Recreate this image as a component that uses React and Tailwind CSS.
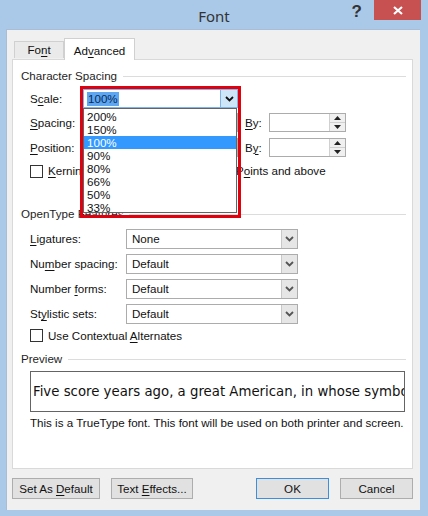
import React from 'react'

const UI = { fontFamily: "'Liberation Sans', Arial, sans-serif" }

function Chevron({ dark }) {
  return (
    <svg width="9" height="6" viewBox="0 0 9 6">
      <path d="M1 1 L4.5 4.5 L8 1" fill="none" stroke={dark ? '#111' : '#555'} strokeWidth="1.8" />
    </svg>
  )
}

function Combo({ value, width = 172 }) {
  return (
    <div className="flex h-[20px] border border-[#acacac] bg-white" style={{ width }}>
      <div className="flex-1 flex items-center pl-[5px] text-[#111]">{value}</div>
      <div className="w-[16px] flex items-center justify-center bg-[#e6e6e6] border-l border-[#c8c8c8]">
        <Chevron />
      </div>
    </div>
  )
}

function Spin() {
  return (
    <div className="flex h-[19px] w-[77px] border border-[#acacac] bg-white">
      <div className="flex-1" />
      <div className="w-[16px] flex flex-col border-l border-[#d0d0d0] bg-[#f0f0f0]">
        <div className="flex-1 flex items-center justify-center border-b border-[#d0d0d0]">
          <svg width="7" height="4" viewBox="0 0 7 4"><path d="M0 4 L3.5 0 L7 4 Z" fill="#222" /></svg>
        </div>
        <div className="flex-1 flex items-center justify-center">
          <svg width="7" height="4" viewBox="0 0 7 4"><path d="M0 0 L3.5 4 L7 0 Z" fill="#222" /></svg>
        </div>
      </div>
    </div>
  )
}

function Check({ children }) {
  return (
    <div className="flex items-center gap-[5px]">
      <div className="w-[13px] h-[13px] border border-[#333] bg-white shrink-0" />
      <span className="whitespace-nowrap">{children}</span>
    </div>
  )
}

function Header({ children }) {
  return (
    <div className="h-[16px] flex items-center gap-[6px] text-[#1e1e1e]">
      <span>{children}</span>
      <div className="flex-1 h-px bg-[#dcdcdc]" />
    </div>
  )
}

function Btn({ children, w, primary }) {
  return (
    <div className={`h-[21px] flex items-center justify-center text-[11.6px] text-[#111] bg-[#e1e1e1] border ${primary ? 'border-[#3c8ee0]' : 'border-[#adadad]'}`} style={{ width: w }}>
      <span>{children}</span>
    </div>
  )
}

const U = ({ children }) => <span className="underline underline-offset-2 decoration-1">{children}</span>

const scales = ['200%', '150%', '100%', '90%', '80%', '66%', '50%', '33%']

export default function App() {
  return (
    <div className="w-[428px] h-[516px] bg-[#aac8e8] flex flex-col overflow-hidden" style={UI}>
      {/* title bar */}
      <div className="h-[29px] grid grid-cols-[1fr_auto_1fr] shrink-0">
        <div />
        <div className="text-[15px] text-[#333] pt-[5px]" style={{ fontFamily: "'Noto Sans', sans-serif" }}>Font</div>
        <div className="flex justify-end items-start pr-[7px]">
          <div className="text-[17px] font-bold text-[#333] leading-none pt-[3px] mr-[12px]">?</div>
          <div className="w-[47px] h-[20px] bg-[#c75050] flex items-center justify-center">
            <svg width="10" height="9" viewBox="0 0 10 9"><path d="M1 1 L9 8 M9 1 L1 8" stroke="#fff" strokeWidth="2.2" /></svg>
          </div>
        </div>
      </div>

      {/* client */}
      <div className="ml-[6px] mr-[8px] h-[481px] bg-[#f0f0f0] border-l border-t border-[#a9bdd6] pl-[5px] pr-[7px] flex flex-col">
        {/* tabs */}
        <div className="h-[29px] flex items-end pl-[2px] relative z-10 text-[11.6px] text-[#111]">
          <div className="w-[50px] h-[17px] mb-px border border-b-0 border-[#d0d0d0] bg-[#eaeaea] flex items-center justify-center">
            <span>Fo<U>n</U>t</span>
          </div>
          <div className="w-[71px] h-[22px] border border-b-0 border-[#d0d0d0] bg-white flex items-start justify-center pt-[3px] -mb-px">
            <span>Ad<U>v</U>anced</span>
          </div>
        </div>

        {/* panel */}
        <div className="h-[410px] bg-white border border-[#d9d9d9] pl-[8px] pr-[6px] pt-[8px] text-[11.6px] text-[#111] relative">
          <Header>Character Spacing</Header>

          <div className="pl-[9px]">
            {/* Scale */}
            <div className="mt-[5px] h-[19px] flex items-center">
              <span className="w-[53px]">S<U>c</U>ale:</span>
              <div className="relative">
                <div className="flex h-[19px] w-[155px] border border-[#7eb4ea] bg-white">
                  <div className="flex-1 flex items-center pl-[3px]">
                    <span className="bg-[#5ea6ef] text-[#0a2a5c] px-px leading-[14px]">100%</span>
                  </div>
                  <div className="w-[17px] flex items-center justify-center bg-[#cfe6f8] border-l border-[#7eb4ea]">
                    <Chevron dark />
                  </div>
                </div>
                {/* dropdown list */}
                <div className="absolute left-0 top-[19px] w-[154px] h-[105px] bg-white border border-[#646464] z-20 pt-px">
                  {scales.map(s => (
                    <div key={s} className={`h-[13px] leading-[13px] pl-[3px] ${s === '100%' ? 'bg-[#3399ff] text-white' : ''}`}>{s}</div>
                  ))}
                </div>
                {/* red highlight */}
                <div className="absolute -left-[3px] -top-[3px] w-[161px] h-[132px] border-[3px] border-[#e0000e] z-30 pointer-events-none" />
              </div>
            </div>

            {/* Spacing */}
            <div className="mt-[5px] h-[19px] flex items-center">
              <span className="w-[53px]"><U>S</U>pacing:</span>
              <div className="w-[155px] h-[19px] border border-[#acacac] bg-white" />
              <span className="w-[24px] ml-[7px]"><U>B</U>y:</span>
              <Spin />
            </div>

            {/* Position */}
            <div className="mt-[6px] h-[19px] flex items-center">
              <span className="w-[53px]"><U>P</U>osition:</span>
              <div className="w-[155px] h-[19px] border border-[#acacac] bg-white" />
              <span className="w-[24px] ml-[7px]">B<U>y</U>:</span>
              <Spin />
            </div>

            {/* Kerning */}
            <div className="mt-[7px] h-[14px] flex items-center">
              <div className="w-[206px]">
                <Check><U>K</U>erning for fonts:</Check>
              </div>
              <span>P<U>o</U>ints and above</span>
            </div>
          </div>

          <div className="mt-[28px]">
            <Header>OpenType Features</Header>
          </div>

          <div className="pl-[9px]">
            {[
              [<><U>L</U>igatures:</>, 'None'],
              [<>Nu<U>m</U>ber spacing:</>, 'Default'],
              [<>Number <U>f</U>orms:</>, 'Default'],
              [<>St<U>y</U>listic sets:</>, 'Default'],
            ].map(([label, val], i) => (
              <div key={i} className={`${i === 0 ? 'mt-[7px]' : 'mt-[5px]'} h-[20px] flex items-center`}>
                <span className="w-[96px] whitespace-nowrap">{label}</span>
                <Combo value={val} />
              </div>
            ))}
            <div className="mt-[5px] h-[13px] flex items-center">
              <Check>Use Contextual <U>A</U>lternates</Check>
            </div>
          </div>

          <div className="mt-[9px]">
            <Header>Preview</Header>
          </div>

          <div className="pl-[9px]">
            <div className="mt-[4px] w-[375px] h-[41px] border border-[#646464] bg-white flex items-center pl-[2px] overflow-hidden whitespace-nowrap">
              <span className="text-[13.3px] text-[#111]" style={{ fontFamily: "'DejaVu Sans', Verdana, sans-serif" }}>
                Five score years ago, a great American, in whose symbolic shadow we stand today
              </span>
            </div>
            <div className="mt-[4px] h-[14px] flex items-center whitespace-nowrap">
              This is a TrueType font. This font will be used on both printer and screen.
            </div>
          </div>
        </div>

        {/* buttons */}
        <div className="mt-[9px] flex">
          <Btn w={88}>Set As <U>D</U>efault</Btn>
          <div className="ml-[11px]"><Btn w={82}>Text <U>E</U>ffects...</Btn></div>
          <div className="ml-auto flex gap-[11px]">
            <Btn w={73} primary>OK</Btn>
            <Btn w={73}>Cancel</Btn>
          </div>
        </div>
      </div>
    </div>
  )
}
